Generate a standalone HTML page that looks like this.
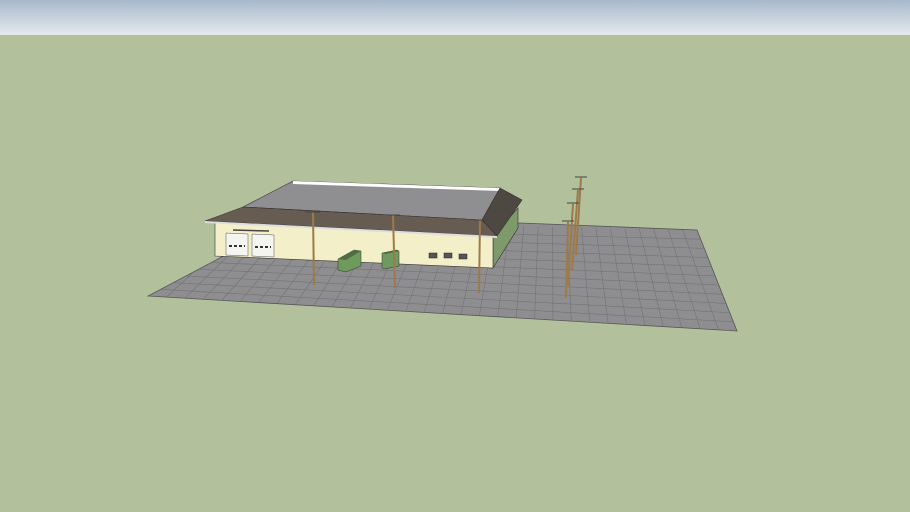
<!DOCTYPE html>
<html><head><meta charset="utf-8"><style>
html,body{margin:0;padding:0;width:910px;height:512px;overflow:hidden;background:#b3c09c}
svg{display:block}
</style></head><body>
<svg id="s" width="910" height="512" viewBox="0 0 910 512" xmlns="http://www.w3.org/2000/svg">
<defs><linearGradient id="sky" x1="0" y1="0" x2="0" y2="1"><stop offset="0" stop-color="#a8b8cc"/><stop offset="1" stop-color="#e4e9ee"/></linearGradient>
<clipPath id="cp"><polygon points="148,296 737,331 697,230 520,223 235,250"/></clipPath></defs>
<rect x="0" y="0" width="910" height="35" fill="url(#sky)"/>
<rect x="0" y="35" width="910" height="477" fill="#b3c09c"/>
<polygon points="148,296 737,331 697,230 520,223 235,250" fill="#8e8e90" stroke="#555" stroke-width="0.8"/>
<g id="grid" stroke="#737375" stroke-width="0.6" clip-path="url(#cp)"></g>
<!-- building -->
<polygon points="493,236 518,208 518,228 493,268" fill="#7e9a6a" stroke="#333" stroke-width="0.6"/>
<polygon points="215,223 493,236 493,268 215,256" fill="#f3f0c9" stroke="#333" stroke-width="0.6"/>
<polygon points="226,233 248,234 248,256 226,255" fill="#f4f4f0" stroke="#555" stroke-width="0.5"/>
<polygon points="252,234 274,235 274,257 252,256" fill="#f4f4f0" stroke="#555" stroke-width="0.5"/>
<line x1="229" y1="246" x2="245" y2="246" stroke="#333" stroke-width="2" stroke-dasharray="3,2"/>
<line x1="255" y1="247" x2="271" y2="247" stroke="#333" stroke-width="2" stroke-dasharray="3,2"/>
<line x1="233" y1="230" x2="269" y2="231" stroke="#444" stroke-width="1.5"/>
<rect x="429" y="253" width="8" height="5" fill="#555" stroke="#222" stroke-width="0.5"/>
<rect x="444" y="253" width="8" height="5" fill="#555" stroke="#222" stroke-width="0.5"/>
<rect x="459" y="254" width="8" height="5" fill="#555" stroke="#222" stroke-width="0.5"/>
<polygon points="293,181 500,188 482,220 243,207" fill="#8f8f91" stroke="#333" stroke-width="0.6"/>
<polygon points="293,181 500,188 500,191 293,184" fill="#ffffff"/>
<polygon points="205,221 243,207 482,220 497,236" fill="#675c52" stroke="#333" stroke-width="0.6"/>
<polygon points="482,220 500,188 522,200 497,236" fill="#4e4842" stroke="#333" stroke-width="0.6"/>
<polygon points="205,221 497,236 497,238 205,223" fill="#ddd"/>
<!-- dumpsters -->
<polygon points="338,259 354,250 361,251 361,266 346,272 338,270" fill="#6e9a5e" stroke="#333" stroke-width="0.5"/>
<polygon points="338,259 354,250 361,251 346,260" fill="#4f6d45"/>
<polygon points="382,253 397,250 399,251 399,266 384,269 382,268" fill="#6e9a5e" stroke="#333" stroke-width="0.5"/>
<polygon points="382,253 397,250 399,251 386,254" fill="#4f6d45"/>
<!-- poles -->
<g stroke="#9c7a4a" stroke-width="2">
<line x1="313" y1="212" x2="314" y2="285"/>
<line x1="393" y1="215" x2="395" y2="288"/>
<line x1="480" y1="220" x2="479" y2="293"/>
<line x1="581" y1="178" x2="576" y2="255"/>
<line x1="578" y1="190" x2="572" y2="270"/>
<line x1="573" y1="204" x2="568" y2="285"/>
<line x1="568" y1="222" x2="566" y2="298"/>
</g>
<g stroke="#444" stroke-width="1">
<line x1="305" y1="212" x2="320" y2="212"/>
<line x1="387" y1="215" x2="400" y2="215"/>
<line x1="474" y1="220" x2="486" y2="220"/>
<line x1="575" y1="177" x2="587" y2="177"/>
<line x1="572" y1="189" x2="584" y2="189"/>
<line x1="567" y1="203" x2="579" y2="203"/>
<line x1="562" y1="221" x2="574" y2="221"/>
</g>
</svg>
<script>
var g=document.getElementById('grid');
var A=[148,296],B=[737,331],C=[697,230],D=[235,220];
function L(p,q,t){return [p[0]+(q[0]-p[0])*t,p[1]+(q[1]-p[1])*t];}
function ln(p,q){var e=document.createElementNS('http://www.w3.org/2000/svg','line');e.setAttribute('x1',p[0]);e.setAttribute('y1',p[1]);e.setAttribute('x2',q[0]);e.setAttribute('y2',q[1]);g.appendChild(e);}
var NU=32,NV=11;
for(var i=1;i<NU;i++){var t=i/NU;ln(L(A,B,t),L(D,C,t));}
for(var j=1;j<NV;j++){var t=j/NV;ln(L(A,D,t),L(B,C,t));}
</script>
</body></html>
